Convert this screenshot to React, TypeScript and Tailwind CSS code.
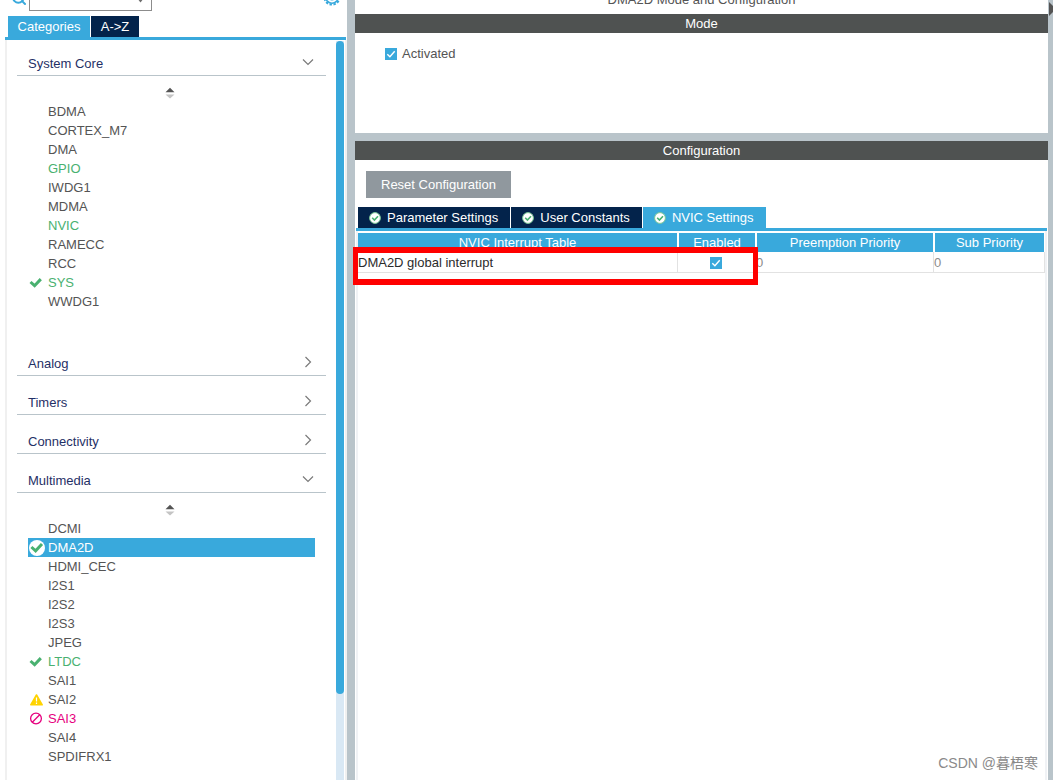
import React from "react";
import { Search } from "lucide-react";

type Status = "on" | "used" | "warning" | "blocked" | "selected";

interface Item {
  name: string;
  status?: Status;
}

interface Category {
  name: string;
  items?: Item[];
}

const categories: Category[] = [
  {
    name: "System Core",
    items: [
      { name: "BDMA" },
      { name: "CORTEX_M7" },
      { name: "DMA" },
      { name: "GPIO", status: "used" },
      { name: "IWDG1" },
      { name: "MDMA" },
      { name: "NVIC", status: "used" },
      { name: "RAMECC" },
      { name: "RCC" },
      { name: "SYS", status: "on" },
      { name: "WWDG1" },
    ],
  },
  { name: "Analog" },
  { name: "Timers" },
  { name: "Connectivity" },
  {
    name: "Multimedia",
    items: [
      { name: "DCMI" },
      { name: "DMA2D", status: "selected" },
      { name: "HDMI_CEC" },
      { name: "I2S1" },
      { name: "I2S2" },
      { name: "I2S3" },
      { name: "JPEG" },
      { name: "LTDC", status: "on" },
      { name: "SAI1" },
      { name: "SAI2", status: "warning" },
      { name: "SAI3", status: "blocked" },
      { name: "SAI4" },
      { name: "SPDIFRX1" },
    ],
  },
];

const itemColors: Record<Status, string> = {
  on: "text-[#49b170]",
  used: "text-[#49b170]",
  warning: "text-[#545454]",
  blocked: "text-[#e6007e]",
  selected: "bg-[#39a9dc] text-white",
};

const StatusIcon: React.FC<{ status?: Status }> = ({ status }) => {
  if (status === "on") {
    return (
      <svg width="16" height="16" viewBox="0 0 16 16" fill="none">
        <path d="M2.5 7 6.6 10.7 12.8 4.1" stroke="#49b170" strokeWidth="3" />
      </svg>
    );
  }
  if (status === "selected") {
    return (
      <svg width="18" height="18" viewBox="0 0 18 18" fill="none">
        <circle cx="9" cy="9" r="8" fill="#fff" />
        <path d="M3.4 8 7.6 11.8 14 5" stroke="#49b170" strokeWidth="3" />
      </svg>
    );
  }
  if (status === "warning") {
    return (
      <svg width="16" height="16" viewBox="0 0 16 16">
        <path d="M8.5 3 14.2 12.8H2.8Z" fill="#ffd300" stroke="#ffd300" strokeWidth="1.6" strokeLinejoin="round" />
        <path d="M8.5 5.6v4M8.5 10.6v1.4" stroke="#fff" strokeWidth="1.2" />
      </svg>
    );
  }
  if (status === "blocked") {
    return (
      <svg width="16" height="16" viewBox="0 0 16 16" fill="none" stroke="#e6007e" strokeWidth="1.3">
        <circle cx="8" cy="7.5" r="5.4" />
        <path d="M4.3 11.2 11.7 3.8" />
      </svg>
    );
  }
  return null;
};

const GearIcon: React.FC = () => (
  <svg width="18" height="18" viewBox="0 0 18 18" fill="none" stroke="#39a9dc">
    <circle cx="9" cy="9" r="7.6" strokeWidth="2" strokeDasharray="2.4 1.58" />
    <circle cx="9" cy="9" r="6.2" strokeWidth="1.6" />
    <circle cx="9" cy="9" r="2.8" strokeWidth="1.4" />
  </svg>
);

const SortArrows: React.FC = () => (
  <svg width="10" height="12" viewBox="0 0 10 12">
    <path d="M0.5 5.2 5 0.8 9.5 5.2Z" fill="#545454" />
    <path d="M0.5 7.4H9.5L5 11.4Z" fill="#c4c4c4" />
  </svg>
);

const Chevron: React.FC<{ open: boolean }> = ({ open }) => (
  <svg width="12" height="12" viewBox="0 0 12 12" fill="none" stroke="#7a7a7a" strokeWidth="1.2">
    <path d={open ? "M1 3.5 6 8.5 11 3.5" : "M3.5 1 8.5 6 3.5 11"} />
  </svg>
);

const TabCheck: React.FC = () => (
  <svg width="12" height="12" viewBox="0 0 12 12" fill="none">
    <circle cx="6" cy="6" r="5.4" fill="#fff" stroke="#7cc796" />
    <path d="M3.2 5.8 5.4 8 9 4.2" stroke="#49b170" strokeWidth="1.6" />
  </svg>
);

const Checkbox: React.FC<{ id: string; label?: string }> = ({ id, label }) => (
  <span className="relative inline-flex h-3 w-3">
    <input
      id={id}
      type="checkbox"
      defaultChecked
      aria-label={label}
      className="peer h-3 w-3 appearance-none border border-[#39a9dc] bg-white checked:bg-[#39a9dc]"
    />
    <svg
      className="pointer-events-none absolute inset-0 hidden peer-checked:block"
      width="12"
      height="12"
      viewBox="0 0 12 12"
      fill="none"
    >
      <path d="M2.3 6.3 4.9 8.8 9.7 3.3" stroke="#fff" strokeWidth="1.4" />
    </svg>
  </span>
);

const CategorySection: React.FC<{ category: Category }> = ({ category }) => (
  <section>
    <button className="flex h-9 w-full items-end justify-between border-b border-[#b9c4ca] pr-3 pb-[3px] pl-[11px] text-[#1f3066]">
      {category.name}
      <span className="pb-1">
        <Chevron open={!!category.items} />
      </span>
    </button>
    {category.items && (
      <div className="px-[11px] pb-[26px]">
        <div className="flex h-[26px] items-center justify-center pt-2 pr-1">
          <SortArrows />
        </div>
        <ul>
          {category.items.map((item) => (
            <li key={item.name}>
              <button
                className={`flex h-[19px] w-full items-center text-left ${
                  item.status ? itemColors[item.status] : "text-[#545454]"
                }`}
              >
                <span className="w-5 shrink-0">
                  <StatusIcon status={item.status} />
                </span>
                {item.name}
              </button>
            </li>
          ))}
        </ul>
      </div>
    )}
  </section>
);

const Sidebar: React.FC = () => (
  <aside className="flex w-[347px] shrink-0 flex-col overflow-hidden pl-[5px]">
    <div className="-mt-3 flex items-start pr-1.5 pb-[5px] pl-1.5">
      <Search size={16} color="#39a9dc" strokeWidth={3} className="mt-0.5 mr-0.5" />
      <div className="relative w-[123px]">
        <input
          type="text"
          aria-label="Search"
          className="block h-[23px] w-full border border-[#8c8c8c] bg-white px-1 outline-none"
        />
        <svg className="absolute right-2 bottom-2" width="7" height="5" viewBox="0 0 7 5">
          <path d="M0 0H7L3.5 4.5Z" fill="#6e6e6e" />
        </svg>
      </div>
      <button aria-label="Settings" className="ml-auto">
        <GearIcon />
      </button>
    </div>
    <div className="flex gap-px pl-[3px] text-white">
      <button className="h-[21px] w-[82px] bg-[#39a9dc]">Categories</button>
      <button className="h-[21px] w-12 bg-[#03234b]">A-&gt;Z</button>
    </div>
    <div className="mr-px h-[3px] shrink-0 bg-[#39a9dc]" />
    <div className="flex min-h-0 flex-1 border-x-2 border-[#f0f0f0]">
      <nav className="flex min-w-0 flex-1 flex-col gap-[3px] overflow-hidden px-2.5">
        {categories.map((category) => (
          <CategorySection key={category.name} category={category} />
        ))}
      </nav>
      <div className="mt-px mr-px w-2 shrink-0 bg-[#d9e8f4]">
        <div className="h-[calc(100%-86px)] rounded-full bg-[#39a9dc]" />
      </div>
    </div>
  </aside>
);

const tabs = [
  { name: "Parameter Settings", active: false },
  { name: "User Constants", active: false },
  { name: "NVIC Settings", active: true },
];

const InterruptTable: React.FC = () => (
  <div className="relative">
    <table className="w-full table-fixed border-separate border-spacing-0">
      <thead>
        <tr className="h-[19px] text-white *:border-white *:bg-[#39a9dc] *:p-0 *:font-normal">
          <th className="border-r">NVIC Interrupt Table</th>
          <th className="w-[78px] border-x">Enabled</th>
          <th className="w-[178px] border-x">Preemption Priority</th>
          <th className="w-[111px] border-x">Sub Priority</th>
        </tr>
      </thead>
      <tbody>
        <tr className="h-[21px] text-[#8c8c8c] *:border-r *:border-b *:border-[#e2e2e2] *:px-0 *:pt-0.5 *:pb-0">
          <td className="text-[#2b2b2b]">DMA2D global interrupt</td>
          <td>
            <div className="flex justify-center pr-0.5">
              <Checkbox id="dma2d-enabled" label="DMA2D global interrupt enabled" />
            </div>
          </td>
          <td>0</td>
          <td>0</td>
        </tr>
      </tbody>
    </table>
    <div className="pointer-events-none absolute top-3.5 right-[287px] -left-[5px] h-[38px] border-x-[5px] border-y-[6px] border-[#ff0000]" />
  </div>
);

const App: React.FC = () => {
  return (
    <div className="flex h-screen overflow-hidden bg-white font-['Liberation_Sans',Arial,sans-serif] text-[13px] leading-4">
      <Sidebar />
      <main className="flex min-w-0 flex-1 flex-col border-r-[5px] border-l-8 border-[#b9c4ca]">
        <div className="flex h-3.5 items-end justify-center pb-1.5 text-[#545454]">
          <h1>DMA2D Mode and Configuration</h1>
        </div>
        <h2 className="h-[19px] bg-[#4f5251] text-center leading-[19px] text-white">Mode</h2>
        <div className="flex h-[100px] items-start px-[30px] pt-[13px]">
          <div className="flex items-center gap-[5px]">
            <Checkbox id="activated" />
            <label htmlFor="activated" className="text-[#545454]">
              Activated
            </label>
          </div>
        </div>
        <div className="h-2 bg-[#b9c4ca]" />
        <h2 className="h-[19px] bg-[#4f5251] text-center leading-[19px] text-white">Configuration</h2>
        <div className="relative flex min-h-0 flex-1 flex-col">
          <div className="px-[11px] pt-[11px] pb-[9px]">
            <button className="block h-[27px] bg-[#90989e] px-[15px] text-white">Reset Configuration</button>
          </div>
          <div className="flex gap-px pl-[3px] text-white">
            {tabs.map((tab) => (
              <button
                key={tab.name}
                className={`flex h-[21px] items-center gap-1.5 pr-3 pl-[11px] ${
                  tab.active ? "bg-[#39a9dc]" : "bg-[#03234b]"
                }`}
              >
                <TabCheck />
                {tab.name}
              </button>
            ))}
          </div>
          <div className="mx-px h-[3px] bg-[#39a9dc]" />
          <div className="mx-px flex-1 border-x-2 border-[#f0f2f5] pt-0.5">
            <InterruptTable />
          </div>
          <div className="absolute right-2.5 bottom-[7px] text-sm leading-5 text-[#8a8a8a] font-['Liberation_Sans','Noto_Sans_CJK_SC',sans-serif]">
            CSDN @暮梧寒
          </div>
        </div>
        <svg className="absolute top-0 right-0" width="4" height="17" viewBox="0 0 4 17">
          <path d="M0 2 4 6V12L0 16Z" fill="#545454" />
        </svg>
      </main>
    </div>
  );
};

export default App;
